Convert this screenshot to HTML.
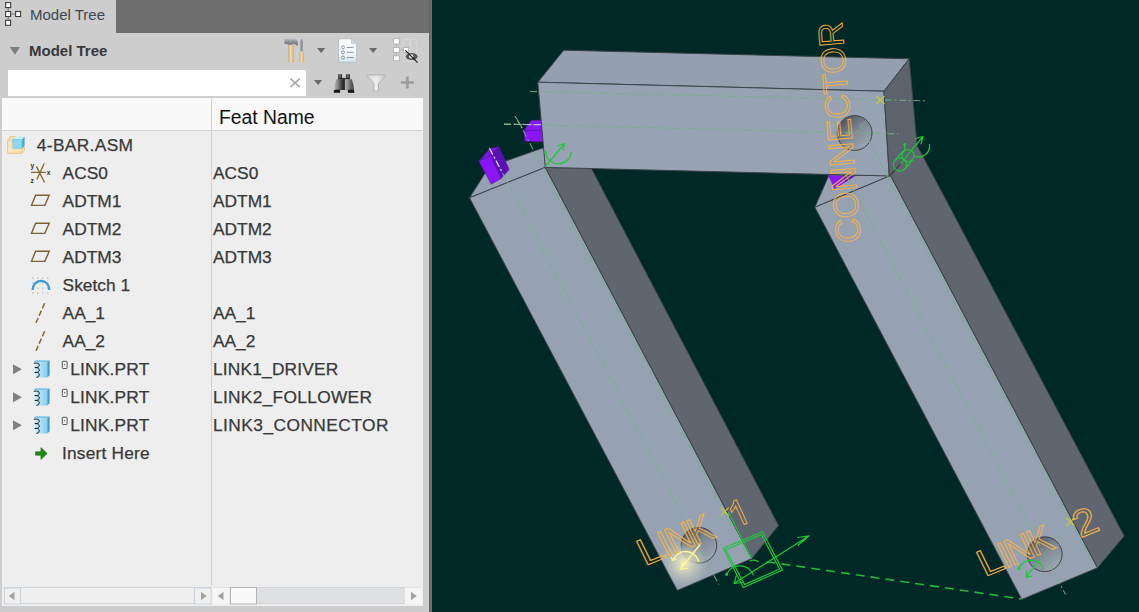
<!DOCTYPE html>
<html>
<head>
<meta charset="utf-8">
<title>Model Tree</title>
<style>
html,body{margin:0;padding:0;}
body{width:1139px;height:612px;overflow:hidden;background:#002827;position:relative;font-family:"Liberation Sans",sans-serif;}
#scene{position:absolute;left:0;top:0;width:1139px;height:612px;}
#panel{position:absolute;left:0;top:0;width:429px;height:612px;background:#cdcdcd;}
#band{position:absolute;left:429px;top:0;width:3px;height:612px;background:#6d6d6d;border-left:1px solid #636363;box-sizing:border-box;}
#tabbar{position:absolute;left:116px;top:0;width:313px;height:33px;background:#6e6e6e;}
#tab{position:absolute;left:0;top:0;width:116px;height:33px;background:#cdcdcd;}
#tabtxt{position:absolute;left:30px;top:7px;font-size:15px;color:#3d4650;white-space:nowrap;line-height:16px;}
#hdr{position:absolute;left:29px;top:43px;font-size:15px;font-weight:bold;color:#38383c;white-space:nowrap;line-height:16px;}
#search{position:absolute;left:8px;top:70px;width:298px;height:26px;background:#fff;}
#table{position:absolute;left:2px;top:98px;width:421px;height:508px;background:#eeeeee;}
#thead{position:absolute;left:0;top:0;width:421px;height:32px;background:#f9f9f9;border-bottom:1px solid #d2d2d2;}
#coldiv{position:absolute;left:209px;top:0;width:1px;height:488px;background:#d0d0d0;}
#featname{position:absolute;left:217px;top:8.5px;font-size:19.33px;color:#111;white-space:nowrap;line-height:22px;}
.row{position:absolute;left:0;width:421px;height:28px;font-size:17.33px;color:#383838;-webkit-text-stroke:0.25px #383838;line-height:29px;white-space:nowrap;}
.row .n{position:absolute;top:0;}
.row .f{position:absolute;left:211px;top:0;}
.ic{position:absolute;left:0;top:0;}
#sb1{position:absolute;left:2px;top:489px;width:207px;height:17px;background:#efefef;border:1px solid #ccd3da;box-sizing:border-box;}
#sb2{position:absolute;left:211px;top:489px;width:208px;height:17px;background:#dfe0e2;border:1px solid #d0d4d8;box-sizing:border-box;}
</style>
</head>
<body>
<svg id="scene" width="1139" height="612" viewBox="0 0 1139 612">
<defs>
  <linearGradient id="hole1" x1="0.18" y1="0.12" x2="0.8" y2="0.9"><stop offset="0" stop-color="#535b66"/><stop offset="0.5" stop-color="#828b97"/><stop offset="1" stop-color="#9ca6b3"/></linearGradient>
  <linearGradient id="holeC" x1="0.15" y1="0.12" x2="0.8" y2="0.9"><stop offset="0" stop-color="#4f5762"/><stop offset="0.5" stop-color="#7f8894"/><stop offset="1" stop-color="#9ba5b2"/></linearGradient>
  <radialGradient id="glow" cx="0.5" cy="0.5" r="0.5">
    <stop offset="0" stop-color="#fbf6b8" stop-opacity="0.95"/><stop offset="0.45" stop-color="#e3e2c0" stop-opacity="0.55"/><stop offset="1" stop-color="#c0c8c8" stop-opacity="0"/>
  </radialGradient>
</defs>
<rect x="0" y="0" width="1139" height="612" fill="#002827"/>
<g stroke="#3e4349" stroke-width="1" stroke-linejoin="round">
  <!-- LINK 1 -->
  <polygon points="469.5,197.8 489.2,166.8 545.5,147 545.3,167.4" fill="#96a2b1"/>
  <polygon points="469.5,197.8 545.3,167.4 751.8,558.6 677.3,590.4" fill="#96a2b2"/>
  <polygon points="545.3,167.4 591.4,168.4 778.5,525.5 751.8,558.6" fill="#5f6670"/>
  <!-- LINK 2 -->
  <polygon points="814.8,207.3 829,175 890.6,175.6" fill="#96a2b1"/>
  <polygon points="814.8,207.3 890.6,175.6 1097.5,567.8 1021.8,599.4" fill="#96a2b2"/>
  <polygon points="890.6,175.6 917,145.3 1124.2,536 1097.5,567.8" fill="#5f6670"/>
</g>
<!-- purple blocks -->
<g stroke="#5a1aa0" stroke-width="0.6" stroke-linejoin="round">
  <polygon points="479,161.3 489.3,149 498.6,146.6 490.9,155.2" fill="#7a18e0"/>
  <polygon points="479,161.3 490.9,155.2 501,178.5 491.2,184.2" fill="#8a14fa"/>
  <polygon points="490.9,155.2 498.6,146.6 509.2,169.5 501,178.5" fill="#5a10b4"/>
  <polygon points="524,130.7 531.3,120.4 543,120 543,130.2" fill="#8818f0"/>
  <polygon points="524,130.7 543,130.2 543.5,141.7 524.8,141.2" fill="#8a14fa"/>
  <polygon points="828.1,175.3 842,175.7 845,182.6 834.5,189" fill="#8a14fa" stroke="none"/><polygon points="842,175.7 855,176 845,182.6" fill="#5c12c4" stroke="none"/>
</g>
<g stroke="#3e4349" stroke-width="1" stroke-linejoin="round">
  <!-- CONNECTOR -->
  <polygon points="563.7,50.2 909.2,58.8 884,91.2 537.8,82.2" fill="#94a0af"/>
  <polygon points="537.8,82.2 884,91.2 889.3,176 545.3,167.4" fill="#97a3b3"/>
  <polygon points="909.2,58.8 917,145.3 889.3,176 884,91.2" fill="#5c636d"/>
</g>
<!-- holes -->
<circle cx="854.6" cy="133" r="17.4" fill="url(#holeC)" stroke="#3e4349" stroke-width="1"/>
<circle cx="698.9" cy="545.3" r="17.8" fill="url(#hole1)" stroke="#3e4349" stroke-width="1"/>
<circle cx="1044.7" cy="554.2" r="17.4" fill="url(#hole1)" stroke="#3e4349" stroke-width="1"/>
<clipPath id="l1f"><polygon points="469.5,197.8 545.3,167.4 751.8,558.6 677.3,590.4"/></clipPath><circle cx="684" cy="563" r="25" fill="url(#glow)" clip-path="url(#l1f)"/>
<!-- axes dash-dot -->
<g stroke="#74b286" stroke-width="1.1" fill="none" stroke-dasharray="7 2.6 2 2.6" opacity="0.85">
  <line x1="530" y1="91.5" x2="925.5" y2="100.8"/>
  <line x1="504" y1="124" x2="898.5" y2="134"/>
  <line x1="489.2" y1="147.800" x2="718.8" y2="584.5"/>
  <line x1="516.5" y1="118" x2="748.5" y2="558"/>
  <line x1="846" y1="175" x2="1065.5" y2="594.5"/>
  <line x1="860" y1="124" x2="1092" y2="562"/>
</g>
<g stroke="#6fb87c" stroke-width="0.9" fill="none" stroke-dasharray="5 4" opacity="0.8">
  <line x1="880.5" y1="100" x2="832" y2="168"/>
  
  <line x1="724.7" y1="511.6" x2="690" y2="552"/>
  <line x1="1070.5" y1="521.8" x2="1039" y2="560"/>
</g>
<!-- yellow X marks -->
<g stroke="#c8c83a" stroke-width="1.3">
  <path d="M876.5,96 l8,8 m0,-8 l-8,8"/>
  <path d="M720.7,507.6 l8,8 m0,-8 l-8,8"/>
  <path d="M1066.5,517.8 l8,8 m0,-8 l-8,8"/>
</g>
<g stroke="#8fc79a" stroke-width="1" fill="none">
  <path d="M504,124.3 h20" stroke-dasharray="7 2.500"/><path d="M514.800,116 l8,13" stroke-dasharray="3 2.500"/><path d="M524.500,124.600 h18" stroke="#c9b8f2" stroke-dasharray="7 2.500"/><path d="M489.600,148.500 L502.500,173" stroke="#d8c8f8" stroke-width="1.200" stroke-dasharray="7 2.500 2 2.500"/>
</g>
<!-- green dashed ground line -->
<line x1="766.7" y1="561.7" x2="1021.5" y2="599" stroke="#22b83a" stroke-width="1.6" stroke-dasharray="9 6"/>
<!-- green symbols -->
<g stroke="#1fc63c" stroke-width="1.2" fill="none" stroke-linecap="round">
  <!-- joint 1 rotation -->
  <path d="M545.5,166.5 L564.5,143.5 M564.5,143.5 l-6.5,2.2 M564.5,143.5 l-1.5,6.8"/>
  <path d="M545.5,152.5 A13,13 0 0 0 571.3,152.3"/>
  <circle cx="545.5" cy="152.3" r="0.9" fill="#1fc63c"/>
  <!-- joint 2 pin -->
  <path d="M901,163.500 L923,136.5 M923,136.5 l-7.5,2 M923,136.5 l-2,7.5"/>
  <circle cx="900" cy="164.5" r="6.6"/><circle cx="908" cy="155.5" r="6"/>
  <path d="M895,160.2 L903.5,151 M905,168.8 L912.5,160"/>
  <path d="M914,156 A11,11 0 0 0 929.5,144.5"/>
  <path d="M904.6,144.6 l0,6"/><circle cx="904.6" cy="144.4" r="0.9" fill="#1fc63c"/>
  <!-- base box -->
  <polygon points="723.3,548.3 762.5,531.7 782.5,570 743.3,587.5"/>
  <polygon points="725.8,549.8 761.3,534.6 779.7,569 744.6,584.6"/>
  <path d="M734.2,583.3 L809.2,535.8 M809.2,535.8 l-11.7,1.7 M809.2,535.8 l-10.9,9.2"/>
  <path d="M734.2,583.3 l2,-7.5 M734.2,583.3 l8,-0.8"/>
  <path d="M726.7,574.2 A14.5,14.5 0 0 1 753.3,575"/>
  <circle cx="726.7" cy="574.2" r="1" fill="#1fc63c"/>
  <path d="M728.3,512.5 L751.7,558.3"/>
  <path d="M750,561 q4,-2 8,0.5"/>
  <!-- link2 bottom -->
  <path d="M1039.5,560 L1026.1,577.2 M1026.1,577.2 l0.8,-6 M1026.1,577.2 l6,-1.2"/>
  <path d="M1019,568.6 A13,13 0 0 1 1043.7,569.5"/>
  <circle cx="1019" cy="568.6" r="0.9" fill="#1fc63c"/>
</g>
<!-- yellow symbol link1 bottom -->
<g stroke="#fbf796" stroke-width="1.4" fill="none" stroke-linecap="round">
  <path d="M699.9,544.8 L680.3,569.4 M680.3,569.4 l2.6,-5.6 M680.3,569.4 l7.2,-1"/>
  <path d="M673,560.3 A13.500,13.500 0 0 1 698.6,561.2"/>
  <path d="M673,560.300 l-1.600,-2.600 M673,560.300 l2.800,-1.400"/>
</g>
<!-- orange texts -->
<g fill="none" stroke="#f4b044" stroke-width="1.05" font-family="Liberation Sans, sans-serif">
  <text transform="matrix(1.0414,-0.4228,0.4400,0.8980,644.73,565.99)" font-size="38">L</text>
  <text transform="matrix(0.8524,-0.3461,0.4400,0.8980,665.83,557.42)" font-size="38">I</text>
  <text transform="matrix(0.9145,-0.3713,0.4400,0.8980,672.73,554.62)" font-size="38">N</text>
  <text transform="matrix(0.8552,-0.3472,0.4400,0.8980,695.06,545.55)" font-size="38">K</text>
  <path transform="matrix(0.9265,-0.3762,0.419,0.908,744.1,524.4)" d="M0,0 L3.3,0 L3.3,-25.7 L0.8,-25.7 Q-1.5,-21.8 -6.2,-19.300 L-6.2,-16 Q-2.2,-17.800 0,-20.200 Z"/>
  <text transform="matrix(1.0401,-0.4261,0.4400,0.8980,984.74,577.10)" font-size="38">L</text>
  <text transform="matrix(0.8514,-0.3488,0.4400,0.8980,1005.44,568.62)" font-size="38">I</text>
  <text transform="matrix(0.9134,-0.3742,0.4400,0.8980,1012.05,565.91)" font-size="38">N</text>
  <text transform="matrix(0.8541,-0.3499,0.4400,0.8980,1034.82,556.58)" font-size="38">K</text>
  <text transform="matrix(0.9948,-0.4075,0.4400,0.8980,1080.22,537.98)" font-size="38">2</text>
  <text transform="matrix(-0.085,-0.996,0.996,-0.085,860.8,242)" font-size="35" stroke-width="0.95" textLength="221.7" lengthAdjust="spacingAndGlyphs">CONNECTOR</text>
</g>

</svg>
<div id="panel">
  <div id="tabbar"></div>
  <div id="tab"><div id="tabtxt">Model Tree</div></div>
  <div id="hdr">Model Tree</div>
  <div id="search"></div>
  <div id="table">
    <div id="thead"><div id="featname">Feat Name</div></div>
    <div id="coldiv"></div>
    <div class="row" style="top:33px"><span class="n" style="left:34.8px;letter-spacing:0.35px">4-BAR.ASM</span></div>
    <div class="row" style="top:61px"><span class="n" style="left:60.6px">ACS0</span><span class="f">ACS0</span></div>
    <div class="row" style="top:89px"><span class="n" style="left:60.6px">ADTM1</span><span class="f">ADTM1</span></div>
    <div class="row" style="top:117px"><span class="n" style="left:60.6px">ADTM2</span><span class="f">ADTM2</span></div>
    <div class="row" style="top:145px"><span class="n" style="left:60.6px">ADTM3</span><span class="f">ADTM3</span></div>
    <div class="row" style="top:173px"><span class="n" style="left:60.6px">Sketch 1</span></div>
    <div class="row" style="top:201px"><span class="n" style="left:60.6px">AA_1</span><span class="f">AA_1</span></div>
    <div class="row" style="top:229px"><span class="n" style="left:60.6px">AA_2</span><span class="f">AA_2</span></div>
    <div class="row" style="top:257px"><span class="n" style="left:68.2px;letter-spacing:0.2px">LINK.PRT</span><span class="f" style="letter-spacing:0.18px">LINK1_DRIVER</span></div>
    <div class="row" style="top:285px"><span class="n" style="left:68.2px;letter-spacing:0.2px">LINK.PRT</span><span class="f" style="letter-spacing:0.3px">LINK2_FOLLOWER</span></div>
    <div class="row" style="top:313px"><span class="n" style="left:68.2px;letter-spacing:0.2px">LINK.PRT</span><span class="f" style="letter-spacing:0.45px">LINK3_CONNECTOR</span></div>
    <div class="row" style="top:341px"><span class="n" style="left:60.0px;letter-spacing:0.2px">Insert Here</span></div>

    <div id="sb1"></div>
    <div id="sb2"></div>
  </div>
<svg width="429" height="612" viewBox="0 0 429 612" style="position:absolute;left:0;top:0;">
<defs>
  <linearGradient id="wood" x1="0" y1="0" x2="1" y2="0"><stop offset="0" stop-color="#c8a667"/><stop offset="0.4" stop-color="#efdcb4"/><stop offset="1" stop-color="#cfac6d"/></linearGradient>
  <linearGradient id="metal" x1="0" y1="0" x2="0" y2="1"><stop offset="0" stop-color="#c8ccd4"/><stop offset="0.5" stop-color="#8a8e99"/><stop offset="1" stop-color="#6d717c"/></linearGradient>
  <linearGradient id="doc" x1="0" y1="0" x2="0" y2="1"><stop offset="0" stop-color="#ffffff"/><stop offset="0.6" stop-color="#f4f8fa"/><stop offset="1" stop-color="#cfe2ec"/></linearGradient>
  <linearGradient id="bino" x1="0" y1="0" x2="1" y2="0"><stop offset="0" stop-color="#3a3a3a"/><stop offset="0.5" stop-color="#8c8c8c"/><stop offset="1" stop-color="#2c2c2c"/></linearGradient>
  <linearGradient id="fun" x1="0" y1="0" x2="1" y2="0"><stop offset="0" stop-color="#d2d2d2"/><stop offset="0.5" stop-color="#eeeeee"/><stop offset="1" stop-color="#c6c6c6"/></linearGradient>
  <linearGradient id="prt" x1="0" y1="0" x2="1" y2="0"><stop offset="0" stop-color="#e4f6fc"/><stop offset="0.45" stop-color="#b4e4f6"/><stop offset="1" stop-color="#86cfee"/></linearGradient>
  <linearGradient id="binov" x1="0" y1="0" x2="0" y2="1"><stop offset="0" stop-color="#000" stop-opacity="0"/><stop offset="0.6" stop-color="#000" stop-opacity="0"/><stop offset="1" stop-color="#000" stop-opacity="0.55"/></linearGradient>
  <clipPath id="binoc"><path d="M338.800,74.200 h4.300 v3 l0.500,1 v14.400 h-9.800 q0.600,-8.600 3.400,-14.400 l1.600,-1 z"/><path d="M349.100,74.200 h-4.300 v3 l-0.500,1 v14.400 h9.800 q-0.600,-8.600 -3.400,-14.400 l-1.600,-1 z"/></clipPath>
  <linearGradient id="eyep" x1="0" y1="0" x2="1" y2="0"><stop offset="0" stop-color="#3a3a3a"/><stop offset="0.5" stop-color="#707070"/><stop offset="1" stop-color="#1c1c1c"/></linearGradient>
  <linearGradient id="binoL" x1="0" y1="0" x2="1" y2="0"><stop offset="0" stop-color="#c0c0c0"/><stop offset="0.35" stop-color="#8a8a8a"/><stop offset="0.8" stop-color="#303030"/><stop offset="1" stop-color="#222"/></linearGradient>
  <linearGradient id="binoR" x1="0" y1="0" x2="1" y2="0"><stop offset="0" stop-color="#b0b0b0"/><stop offset="0.4" stop-color="#858585"/><stop offset="1" stop-color="#333"/></linearGradient>
</defs>
<!-- tab icon -->
<g fill="#fff" stroke="#3c3c3c" stroke-width="1.1">
  <path d="M8.2,7.5 V11.5 M8.2,16.5 V20 M11,14 H15.5" stroke="#777" fill="none"/>
  <rect x="5.6" y="2.6" width="5" height="5"/><rect x="5.6" y="11.5" width="5" height="5"/><rect x="5.6" y="20.3" width="5" height="5"/><rect x="15.6" y="11.5" width="5" height="5"/>
</g>
<polygon points="9.8,47 20,47 14.9,54.8" fill="#7f7f7f"/>
<!-- hammer -->
<rect x="288.4" y="43" width="5.5" height="19.8" rx="1.2" fill="url(#wood)"/>
<path d="M284.300,39.400 q0,-1.300 1.500,-1.300 h7.200 q3.600,0.200 4.900,3.600 v3.800 h-1.700 q-0.300,-1.500 -1.900,-1.500 h-2 v0.800 h-4.700 v-0.800 h-1.800 q-1.500,0 -1.500,-1.300 z" fill="url(#metal)"/>
<path d="M301.6,38.2 l1.2,3 v10.6 h-2.4 v-10.6 z" fill="#8b8f9a"/>
<rect x="299.7" y="51.6" width="4.2" height="11.2" rx="1.1" fill="url(#wood)"/>
<polygon points="317,48 325.2,48 321.1,53" fill="#6b6b6b"/>
<!-- doc -->
<path d="M338.5,38.8 h13 l5.2,4.6 v19 h-18.2 z" fill="url(#doc)" stroke="#b4bcc4" stroke-width="0.9"/>
<path d="M351.5,38.8 v4.6 h5.2 z" fill="#cfe0ea" stroke="#b4bcc4" stroke-width="0.7"/>
<g stroke="#90969e" stroke-width="1" fill="none">
  <circle cx="343" cy="47.4" r="1.5"/><circle cx="343" cy="52.3" r="1.5"/><circle cx="343" cy="57.5" r="1.5"/>
  <path d="M346.6,47.4 h7 M346.6,52.3 h7 M346.6,57.5 h7"/>
</g>
<polygon points="369,48 377.2,48 373.1,53" fill="#6b6b6b"/>
<!-- tree/eye icon -->
<g fill="none" stroke="#d9d9d9" stroke-width="0.9"><rect x="403.5" y="39.3" width="6.5" height="22"/><rect x="410" y="39.3" width="6.8" height="22"/></g>
<g fill="#fff" stroke="#b4b4b4" stroke-width="1">
  <path d="M396.4,44 V47.5 M396.4,52.5 V56 M399.6,49.9 H403.5" fill="none"/>
  <rect x="393.5" y="38.6" width="5.8" height="5.4"/><rect x="393.5" y="47.4" width="5.8" height="5"/><rect x="393.5" y="55.8" width="5.8" height="5"/><rect x="403.6" y="47.4" width="5" height="5"/>
</g>
<ellipse cx="411.7" cy="56.6" rx="5.9" ry="3.5" fill="#555"/><ellipse cx="411.2" cy="56.4" rx="2.3" ry="2.1" fill="#e8e8e8"/>
<path d="M405.3,50.3 L417.6,62.7" stroke="#111" stroke-width="1.1"/>
<!-- search X -->
<path d="M290.4,78.6 l9.4,8.4 M299.8,78.6 l-9.4,8.4" stroke="#a6a6a6" stroke-width="1.600" fill="none"/>
<polygon points="314,80 322.2,80 318.1,85" fill="#6b6b6b"/>
<!-- binoculars -->
<rect x="338.100" y="74.200" width="3.900" height="4.600" fill="url(#eyep)"/>
<rect x="346" y="74.200" width="3.900" height="4.600" fill="url(#eyep)"/>
<rect x="338.100" y="77.900" width="11.800" height="1.800" fill="#2b2b2b"/>
<path d="M336.300,79.200 h8.600 v10.800 h-4.700 l-0.200,2.700 h-6.200 q0.300,-8 2.500,-13.500 z" fill="url(#binoL)"/>
<path d="M345.100,79.200 h6.800 q2,5.500 2.300,13.500 h-6.200 l-0.200,-2.700 h-2.700 z" fill="url(#binoR)"/>
<path d="M333.850,90.200 q3,-1 6.300,-0.300 l-0.150,2.800 h-6.200 z" fill="#1c1c1c"/>
<path d="M354.150,90.200 q-3,-1 -6.300,-0.300 l0.150,2.800 h6.200 z" fill="#1c1c1c"/>
<!-- funnel -->
<path d="M366.400,75.200 q9.800,-1.400 19.600,0 l-7.500,8.500 v7 q-2.300,1.400 -4.600,0 v-7 z" fill="url(#fun)" stroke="#adadad" stroke-width="0.900"/>
<path d="M366.400,75.200 q9.800,1.800 19.600,0" fill="none" stroke="#c4c4c4" stroke-width="0.700"/>
<!-- plus -->
<path d="M400.9,82.500 h13 M407.4,76.400 v12.200" stroke="#9b9b9b" stroke-width="2.600" fill="none"/>
<!--ROWICONS-->
<g>
<path d="M7.6,140.2 l2.6,-3.6 h5 v10.5 h9.2 v3.8 l-2.4,2.4 h-14.4 z" fill="#f9e0ac" stroke="#e3c07c" stroke-width="0.8"/>
<path d="M7.6,140.200 h14.400 v12.800 h-14.400 z" fill="#fbe3b3" stroke="#e8c98c" stroke-width="0.6"/>
<path d="M12.8,139.4 l2.600,-3 h9.200 l-2.600,3 z" fill="#c9effa"/>
<path d="M22,139.400 l2.600,-3 v9.400 l-2.600,2.800 z" fill="#4ea6cf"/>
<rect x="12.800" y="139.400" width="9.200" height="9.200" fill="#8fd7f1" stroke="#6fc3e4" stroke-width="0.6"/>
</g>
<g stroke="#86672f" stroke-width="1.300" fill="none">
<path d="M31,172.300 H45.800 M36.400,166.400 L44.600,182.500 M44.200,163.500 L36.800,179.600"/>
</g>
<g fill="#2c2c2c" font-family="Liberation Sans, sans-serif" font-size="6.600" font-weight="bold">
<text x="30.600" y="167.800">y</text><text x="30.600" y="182.600">z</text><text x="46.800" y="175.200">x</text>
</g>
<polygon points="31.400,205.4 35.600,195.3 49.200,195.3 44.800,205.4" fill="none" stroke="#7e6032" stroke-width="1.400"/>
<polygon points="31.400,233.4 35.600,223.3 49.200,223.3 44.800,233.4" fill="none" stroke="#7e6032" stroke-width="1.400"/>
<polygon points="31.400,261.4 35.600,251.3 49.200,251.3 44.800,261.4" fill="none" stroke="#7e6032" stroke-width="1.400"/>
<g fill="#8aa3b5"><rect x="32.3" y="277.5" width="1.1" height="1.1"/><rect x="37.3" y="277.5" width="1.1" height="1.1"/><rect x="42.3" y="277.5" width="1.1" height="1.1"/><rect x="47.3" y="277.5" width="1.1" height="1.1"/><rect x="32.3" y="282.5" width="1.1" height="1.1"/><rect x="37.3" y="282.5" width="1.1" height="1.1"/><rect x="42.3" y="282.5" width="1.1" height="1.1"/><rect x="47.3" y="282.5" width="1.1" height="1.1"/><rect x="32.3" y="287.5" width="1.1" height="1.1"/><rect x="37.3" y="287.5" width="1.1" height="1.1"/><rect x="42.3" y="287.5" width="1.1" height="1.1"/><rect x="47.3" y="287.5" width="1.1" height="1.1"/><rect x="32.3" y="292.5" width="1.1" height="1.1"/><rect x="37.3" y="292.5" width="1.1" height="1.1"/><rect x="42.3" y="292.5" width="1.1" height="1.1"/><rect x="47.3" y="292.5" width="1.1" height="1.1"/></g>
<path d="M32.600,290 Q33.500,281 41,280.800 Q48.500,281 49.300,290" fill="none" stroke="#3a9bd2" stroke-width="2.300"/>
<path d="M44.600,303.3 L36,322.8" stroke="#86672f" stroke-width="1.500" stroke-dasharray="5.500 2.500" fill="none"/>
<path d="M44.600,331.3 L36,350.8" stroke="#86672f" stroke-width="1.500" stroke-dasharray="5.500 2.500" fill="none"/>
<g transform="translate(0,0)">
<polygon points="13,364.300 13,374.300 21.900,369.300" fill="#808080"/>
<path d="M33,362.400 l2.400,-2.200 h14.200 l-2.400,2.200 z" fill="#7cc4e6"/>
<path d="M47.200,362.400 l2.400,-2.200 v15 l-2.400,2.400 z" fill="#3f9bcb"/>
<rect x="33" y="362.400" width="14.200" height="15.200" fill="url(#prt)"/>
<path d="M33.800,363.400 q5.500,-1.200 5.500,1.800 q0,2.800 -4.500,2.400 q4.500,-0.400 4.500,2.400 q0,2.800 -4.500,2.400 q4.500,-0.400 4.500,2.400 q0,2.600 -3,2.600" fill="none" stroke="#222" stroke-width="1"/>
<rect x="62.300" y="361.300" width="4.800" height="7.200" rx="0.800" fill="#f4f4f4" stroke="#444" stroke-width="0.900"/>
<rect x="64.300" y="364" width="1" height="1.400" fill="#555"/>
</g>
<g transform="translate(0,28)">
<polygon points="13,364.300 13,374.300 21.900,369.300" fill="#808080"/>
<path d="M33,362.400 l2.400,-2.200 h14.200 l-2.400,2.200 z" fill="#7cc4e6"/>
<path d="M47.200,362.400 l2.400,-2.200 v15 l-2.400,2.400 z" fill="#3f9bcb"/>
<rect x="33" y="362.400" width="14.200" height="15.200" fill="url(#prt)"/>
<path d="M33.800,363.400 q5.500,-1.200 5.500,1.800 q0,2.800 -4.500,2.400 q4.500,-0.400 4.500,2.400 q0,2.800 -4.500,2.400 q4.500,-0.400 4.500,2.400 q0,2.600 -3,2.600" fill="none" stroke="#222" stroke-width="1"/>
<rect x="62.300" y="361.300" width="4.800" height="7.200" rx="0.800" fill="#f4f4f4" stroke="#444" stroke-width="0.900"/>
<rect x="64.300" y="364" width="1" height="1.400" fill="#555"/>
</g>
<g transform="translate(0,56)">
<polygon points="13,364.300 13,374.300 21.900,369.300" fill="#808080"/>
<path d="M33,362.400 l2.400,-2.200 h14.200 l-2.400,2.200 z" fill="#7cc4e6"/>
<path d="M47.200,362.400 l2.400,-2.200 v15 l-2.400,2.400 z" fill="#3f9bcb"/>
<rect x="33" y="362.400" width="14.200" height="15.200" fill="url(#prt)"/>
<path d="M33.800,363.400 q5.500,-1.200 5.500,1.800 q0,2.800 -4.500,2.400 q4.500,-0.400 4.500,2.400 q0,2.800 -4.500,2.400 q4.500,-0.400 4.500,2.400 q0,2.600 -3,2.600" fill="none" stroke="#222" stroke-width="1"/>
<rect x="62.300" y="361.300" width="4.800" height="7.200" rx="0.800" fill="#f4f4f4" stroke="#444" stroke-width="0.900"/>
<rect x="64.300" y="364" width="1" height="1.400" fill="#555"/>
</g>
<path d="M35.500,451.800 h5.400 v-4.300 l6.300,6 l-6.300,6 v-4.300 h-5.400 z" fill="#1c8a12" stroke="#0e5c0a" stroke-width="0.500"/>
<g>
<rect x="4.500" y="588" width="16" height="16" fill="#f0f0f0" stroke="#ccd3da" stroke-width="1"/>
<rect x="194.500" y="588" width="16.500" height="16" fill="#f0f0f0" stroke="#ccd3da" stroke-width="1"/>
<polygon points="14.500,591.800 14.500,600.200 8.800,596" fill="#a3a3a3"/>
<polygon points="201,591.800 201,600.200 206.700,596" fill="#a3a3a3"/>
<rect x="213" y="587.500" width="16.500" height="16.500" fill="#f6f6f6"/>
<rect x="405" y="587.500" width="16.500" height="16.500" fill="#f6f6f6"/>
<polygon points="223.500,591.800 223.500,600.200 217.800,596" fill="#a3a3a3"/>
<polygon points="411,591.800 411,600.200 416.700,596" fill="#a3a3a3"/>
<rect x="230.500" y="587.500" width="26" height="16.500" fill="#f9f9f9" stroke="#b4b4b4" stroke-width="1"/>
</g>
</svg>

</div>
<div id="band"></div>
</body>
</html>
